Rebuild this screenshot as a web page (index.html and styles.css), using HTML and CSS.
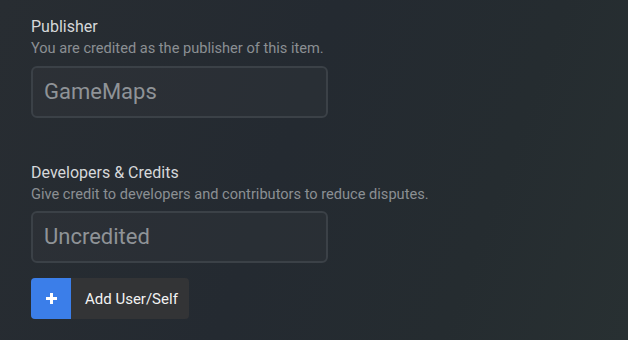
FILE: index.html
```html
<!DOCTYPE html>
<html>
<head>
<meta charset="utf-8">
<link rel="stylesheet" href="styles.css">
</head>
<body>
<div class="page">
  <section class="field">
    <div class="label">Publisher</div>
    <div class="hint">You are credited as the publisher of this item.</div>
    <div class="input">GameMaps</div>
  </section>
  <section class="field second">
    <div class="label">Developers &amp; Credits</div>
    <div class="hint">Give credit to developers and contributors to reduce disputes.</div>
    <div class="input">Uncredited</div>
    <button class="add-btn">
      <span class="add-icon"><svg width="11" height="11" viewBox="0 0 11 11"><rect x="4" y="0" width="3" height="11" fill="#fff"/><rect x="0" y="4" width="11" height="3" fill="#fff"/></svg></span>
      <span class="add-text">Add User/Self</span>
    </button>
  </section>
</div>
</body>
</html>
```
FILE: styles.css
```css
html, body {
  margin: 0;
  padding: 0;
  height: 100%;
}
body {
  background: linear-gradient(110deg, #282d32 0%, #242a31 45%, #252c30 75%, #283032 100%);
  font-family: Roboto, "Noto Sans", sans-serif;
  overflow: hidden;
}
.page {
  padding: 16px 31px 0;
}
.field {
  display: flex;
  flex-direction: column;
  align-items: flex-start;
}
.second {
  margin-top: 44px;
}
.label {
  color: #d6d8da;
  font-size: 16px;
  line-height: 21px;
}
.hint {
  color: #8b8f93;
  font-size: 14.6px;
  line-height: 20px;
  margin-top: 1px;
}
.input {
  box-sizing: border-box;
  margin-top: 8px;
  width: 297px;
  height: 52px;
  border: 2px solid #3b4147;
  border-radius: 6px;
  background: rgba(255,255,255,0.025);
  color: #8f9397;
  font-size: 22px;
  line-height: 48px;
  padding-left: 11px;
}
.second .input {
  margin-top: 7px;
}
.add-btn {
  margin-top: 15px;
  display: flex;
  align-items: stretch;
  height: 41px;
  padding: 0;
  border: none;
  border-radius: 4px;
  overflow: hidden;
  background: #333436;
  font-family: inherit;
  cursor: pointer;
}
.add-icon {
  width: 40px;
  background: #3b7ee9;
  display: flex;
  align-items: center;
  justify-content: center;
}
.add-text {
  display: flex;
  align-items: center;
  padding: 0 11px 0 14px;
  color: #f2f2f2;
  font-size: 15px;
}
```
